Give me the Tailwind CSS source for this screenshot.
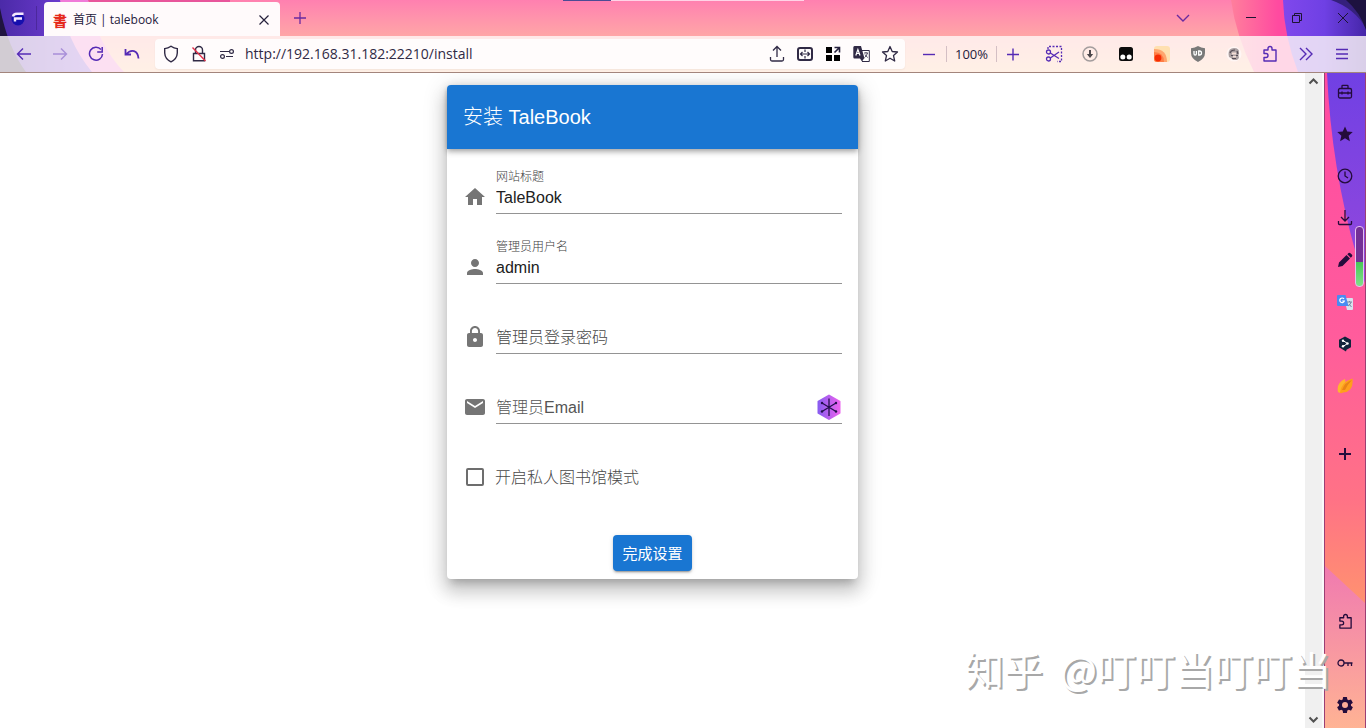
<!DOCTYPE html>
<html lang="zh-CN">
<head>
<meta charset="utf-8">
<meta name="viewport" content="width=device-width, initial-scale=1">
<title>首页 | talebook</title>
<script src="https://cdn.jsdelivr.net/npm/@tailwindcss/browser@4"></script>
</head>
<body class="h-screen flex flex-col overflow-hidden bg-white font-['Open_Sans','Noto_Sans_CJK_SC',sans-serif] text-[#25203c]">

<header class="relative shrink-0 border-b border-[#a3857c] bg-linear-to-b from-[#ff80b0] to-[#ffc89a]">
  <!-- theme artwork -->
  <svg class="absolute left-0 top-0" width="300" height="72" viewBox="0 0 300 72" aria-hidden="true">
    <defs><linearGradient id="vio" x1="0" x2="1"><stop offset="0" stop-color="#4b2aa8"/><stop offset="1" stop-color="#7b43e0"/></linearGradient></defs>
    <path d="M0 0H88Q98 45 124 72H0Z" fill="#f07ad8"/>
    <path d="M0 0H60Q66 40 92 72H0Z" fill="url(#vio)"/>
    <path d="M88 0H230V8H92Z" fill="#e8559b"/>
    <path d="M0 8Q8 48 26 72H0Z" fill="#20143f"/>
  </svg>
  <svg class="absolute right-0 top-0" width="180" height="72" viewBox="0 0 180 72" aria-hidden="true">
    <defs><linearGradient id="pk" x1="0" x2="1"><stop offset="0" stop-color="#ff7f9c"/><stop offset=".35" stop-color="#ff4aa0"/></linearGradient>
    <linearGradient id="vr" x1="0" x2="1"><stop offset="0" stop-color="#8048ec"/><stop offset=".5" stop-color="#6f40e4"/><stop offset="1" stop-color="#4526a8"/></linearGradient></defs>
    <path d="M45 0H180V72H68Q50 36 45 0Z" fill="url(#pk)"/>
    <path d="M97 0H180V72H112Q98 36 97 0Z" fill="url(#vr)"/>
    <path d="M145 0H180V28Q168 8 145 0Z" fill="#35207c"/>
    <path d="M160 0H180V30Q174 12 160 0Z" fill="#1d1240"/>
  </svg>
  <div class="absolute top-0 left-[563px] w-12 h-px bg-[#4c4b94]"></div>
  <div class="absolute top-0 left-[611px] w-[193px] h-px bg-[#ffd3e6]"></div>

  <div class="relative flex h-9 items-center">
    <button class="w-9 h-9 grid place-items-center" aria-label="Firefox View">
      <svg width="16" height="16" viewBox="0 0 16 16"><circle cx="8" cy="9" r="6.500" fill="#160fae"/><path d="M3 6.500Q3.500 3.800 7 3.800H13.500M5 11.500V8.500H12" fill="none" stroke="#f6e9ff" stroke-width="2.400"/></svg>
    </button>
    <div class="w-2 h-6 border-l border-[#4c289c]"></div>
    <div class="self-end flex items-center w-[236px] h-[34px] rounded-t bg-[#fffafb] pt-[2px] pl-2 pr-2">
      <span class="w-4 text-center text-sm leading-4 font-black text-[#e5291c] font-['Noto_Sans_CJK_TC',sans-serif]">書</span>
      <span class="ml-[5px] grow text-xs">首页 | talebook</span>
      <button class="w-4 h-4" aria-label="关闭标签页"><svg width="16" height="16" viewBox="0 0 16 16" fill="none" stroke="#25203c" stroke-width="1.200"><path d="M3.500 3.500l9 9M12.500 3.500l-9 9"/></svg></button>
    </div>
    <button class="w-10 h-9 grid place-items-center" aria-label="新标签页"><svg width="14" height="14" viewBox="0 0 14 14" stroke="#6a2aa0" stroke-width="1.300"><path d="M7 1v12M1 7h12"/></svg></button>
    <div class="grow"></div>
    <button class="w-[46px] h-9 grid place-items-center mr-[22px]" aria-label="列出所有标签页"><svg width="14" height="10" viewBox="0 0 14 10" fill="none" stroke="#6a2aa0" stroke-width="1.400"><path d="M1 2l6 6 6-6"/></svg></button>
    <button class="w-[46px] h-9 grid place-items-center" aria-label="最小化"><svg width="12" height="12" viewBox="0 0 12 12" stroke="#1d1433"><path d="M1 5.500h10"/></svg></button>
    <button class="w-[46px] h-9 grid place-items-center" aria-label="还原"><svg width="12" height="12" viewBox="0 0 12 12" fill="none" stroke="#1d1433"><path d="M1.500 3.500h7v7h-7zM3.500 3.500v-2h7v7h-2"/></svg></button>
    <button class="w-[46px] h-9 grid place-items-center" aria-label="关闭"><svg width="12" height="12" viewBox="0 0 12 12" stroke="#1d1433"><path d="M1 1l10 10M11 1L1 11"/></svg></button>
  </div>

  <nav class="relative flex h-9 items-center bg-[#fffaf9]/80 pl-[6px] pr-[6px] text-[#552bb5]">
    <button class="w-9 h-9 grid place-items-center" aria-label="后退"><svg width="16" height="16" viewBox="0 0 16 16" fill="none" stroke="currentColor" stroke-width="1.400"><path d="M15 8H1.500M7 2.500L1.500 8 7 13.500"/></svg></button>
    <button class="w-9 h-9 grid place-items-center opacity-40" aria-label="前进"><svg width="16" height="16" viewBox="0 0 16 16" fill="none" stroke="currentColor" stroke-width="1.400"><path d="M1 8h13.500M9 2.500L14.500 8 9 13.500"/></svg></button>
    <button class="w-9 h-9 grid place-items-center" aria-label="刷新"><svg width="16" height="16" viewBox="0 0 16 16" fill="none" stroke="currentColor" stroke-width="1.500"><path d="M13 3.500A6.500 6.500 0 1 0 14.500 8"/><path d="M14.200 1v5H9.200" /></svg></button>
    <button class="w-9 h-9 grid place-items-center" aria-label="撤销"><svg width="16" height="16" viewBox="0 0 16 16" fill="none" stroke="currentColor" stroke-width="1.800"><path d="M1.500 3v5.500h5.500M2 8.500Q6 4 10 5.200 14 6.500 14.500 12.500"/></svg></button>
    <div class="ml-[5px] mr-[1px] flex grow h-[30px] items-center rounded bg-[#fffcfc] text-[#302a45] shadow-xs">
      <button class="w-8 grid place-items-center" aria-label="隐私保护"><svg width="16" height="18" viewBox="0 0 16 18" fill="none" stroke="currentColor" stroke-width="1.400"><path d="M8 1.200Q11 3.400 14.300 3.600V8Q14 14 8 16.800 2 14 1.700 8V3.600Q5 3.400 8 1.200Z"/></svg></button>
      <button class="w-6 grid place-items-center" aria-label="连接不安全"><svg width="16" height="18" viewBox="0 0 16 18" fill="none" stroke="currentColor" stroke-width="1.400"><path d="M4.500 8V5a3.500 3.500 0 0 1 7 0v3M2.500 8.500h11v7.300h-11z"/><path d="M1.500 2.500l13 13.500" stroke="#e2304a"/></svg></button>
      <button class="w-8 grid place-items-center" aria-label="权限"><svg width="16" height="12" viewBox="0 0 16 12" fill="none" stroke="currentColor" stroke-width="1.200"><path d="M1 3.500h9M7 8.500h7"/><circle cx="12.500" cy="3.500" r="1.900"/><circle cx="3.500" cy="8.500" r="1.900"/></svg></button>
      <input class="min-w-0 grow h-7 pb-[2px] pl-[2px] text-sm bg-transparent outline-none" aria-label="网址" value="http://192.168.31.182:22210/install">
      <button class="w-7 grid place-items-center" aria-label="分享"><svg width="16" height="18" viewBox="0 0 16 18" fill="none" stroke="currentColor" stroke-width="1.300"><path d="M8 12V1.500M4 5.500l4-4 4 4M1.500 12v2.500q0 1.500 1.500 1.500h10q1.500 0 1.500-1.500V12"/></svg></button>
      <button class="w-7 grid place-items-center" aria-label="页宽"><svg width="16" height="16" viewBox="0 0 16 16" fill="none" stroke="currentColor"><rect x="1" y="2" width="14" height="12" rx="2" stroke-width="2"/><path d="M8 3.500v2.500M8 10v2.500M3.500 8h9M5.500 6l-2 2 2 2M10.500 6l2 2-2 2" stroke-width="1.200"/></svg></button>
      <button class="w-7 grid place-items-center" aria-label="二维码"><svg width="16" height="16" viewBox="0 0 16 16"><path d="M1 1h6v6H1zM1 9h6v6H1zM9 9h6v6H9z" fill="#000"/><path d="M9.500 1.500H14.500V6.500M14 2L9.500 6.500" stroke="#25203c" stroke-width="1.600" fill="none"/></svg></button>
      <button class="w-7 grid place-items-center" aria-label="翻译"><svg width="17" height="16" viewBox="0 0 17 16"><path d="M7.500 4.500h8.800v11H9" fill="#fff" stroke="#302a45"/><path d="M1.500 0h6.500l3.500 12.500H1.500Q.3 12.500.3 11V1.500Q.3 0 1.500 0zM7 12.500h4L9 15.500z" fill="#302a45"/><path d="M2.800 9.500L4.900 3.500 7 9.500M3.500 7.500h2.800" stroke="#fff" stroke-width="1.200" fill="none"/><path d="M11 7h4M13 6v1M14.500 7q-1 3.500-3 4.500M12 8.500q1 2 2.800 3" stroke="#302a45" stroke-width=".8" fill="none"/></svg></button>
      <button class="w-[30px] grid place-items-center" aria-label="收藏"><svg width="18" height="18" viewBox="0 0 18 18" fill="none" stroke="currentColor" stroke-width="1.300" stroke-linejoin="round"><path d="M9 1.500l2.200 5 5.300.5-4 3.600 1.200 5.400L9 13.200 4.300 16l1.200-5.400-4-3.600 5.300-.5z"/></svg></button>
    </div>
    <button class="w-10 pl-[6px] h-9 grid place-items-center" aria-label="缩小"><svg width="14" height="14" viewBox="0 0 14 14" stroke="currentColor" stroke-width="1.400"><path d="M1 7.500h12"/></svg></button>
    <button class="w-[51px] h-4 leading-4 border-x border-[#d4bfc4] pb-[2px] text-center text-[13px] text-[#25203c]">100%</button>
    <button class="w-8 h-9 grid place-items-center" aria-label="放大"><svg width="14" height="14" viewBox="0 0 14 14" stroke="currentColor" stroke-width="1.400"><path d="M7 1.500v12M1 7.500h12"/></svg></button>
    <div class="w-[7px]"></div>
    <button class="w-9 h-9 grid place-items-center" aria-label="截图"><svg width="18" height="18" viewBox="0 0 18 18" fill="none" stroke="currentColor" stroke-width="1.300"><path d="M3 4V1.500H16.500V16.500H12" stroke-dasharray="2 1.500"/><circle cx="3.500" cy="7" r="2"/><circle cx="3.500" cy="14" r="2"/><path d="M5.300 8L14 13.500M5.300 13L14 7"/></svg></button>
    <button class="w-9 h-9 grid place-items-center" aria-label="下载"><svg width="16" height="16" viewBox="0 0 16 16" fill="none"><circle cx="8" cy="8" r="7" stroke="#a39d9d" stroke-width="1.500"/><path d="M8 4v6" stroke="#4d484c" stroke-width="2"/><path d="M4.800 8h6.400L8 12z" fill="#4d484c"/></svg></button>
    <button class="w-9 h-9 grid place-items-center" aria-label="Tampermonkey"><svg width="16" height="16" viewBox="0 0 16 16"><rect x="1" y="1" width="14" height="14" rx="2.500" fill="#0b0b0b"/><circle cx="4.800" cy="11" r="2.500" fill="#fff"/><circle cx="11.200" cy="11" r="2.500" fill="#fff"/></svg></button>
    <button class="w-9 h-9 grid place-items-center" aria-label="RSS"><svg width="16" height="16" viewBox="0 0 16 16"><rect width="16" height="16" rx="3" fill="#ffe0b0"/><path d="M0 3Q13 3 13 16H3Q0 16 0 13Z" fill="#ffa56e"/><path d="M0 6Q10 6 10 16H3Q0 16 0 13Z" fill="#ff7d45"/><circle cx="4" cy="12" r="3.400" fill="#f52c05"/></svg></button>
    <button class="w-9 h-9 grid place-items-center" aria-label="uBlock"><svg width="16" height="16" viewBox="0 0 16 16"><path d="M8 0Q11 2 15 2.200V7Q15 12.500 8 16 1 12.500 1 7V2.200Q5 2 8 0Z" fill="#797979"/><path d="M4 5v2.800q0 1.200 1.200 1.200t1.200-1.200V5M8.700 5v4h.8q2 0 2-2t-2-2z" fill="none" stroke="#fff" stroke-width="1.300"/></svg></button>
    <button class="w-9 h-9 grid place-items-center" aria-label="扩展头像"><svg width="16" height="16" viewBox="0 0 16 16"><circle cx="8" cy="8" r="7.500" fill="#fff6f4"/><path d="M2.500 8Q2.500 2 8 2t5 4.500l-.5 3 .5 2.500-2 2H7l-2-2-2-1z" fill="#aaa0a2"/><path d="M4 7Q5 4 9 4M5 9.500h2M10 9.500h2M6 12.500h4M11 5l1 3" stroke="#554c55" fill="none" stroke-width="1.200"/><path d="M6 6.500h4v2H6zM7 10h3v1.500H7z" fill="#f5dfd8"/></svg></button>
    <button class="w-9 h-9 grid place-items-center" aria-label="扩展"><svg width="16" height="18" viewBox="0 0 16 18" fill="none" stroke="currentColor" stroke-width="1.400" stroke-linejoin="round"><path d="M2 5H6V3.500a2 2 0 0 1 4 0V5H14V16H2V12.500H4a2 2 0 0 0 0-4H2Z"/></svg></button>
    <button class="w-9 h-9 grid place-items-center" aria-label="更多工具"><svg width="16" height="14" viewBox="0 0 16 14" fill="none" stroke="currentColor" stroke-width="1.400"><path d="M2 1l6 6-6 6M8 1l6 6-6 6"/></svg></button>
    <button class="w-9 h-9 grid place-items-center" aria-label="菜单"><svg width="14" height="12" viewBox="0 0 14 12" stroke="currentColor" stroke-width="1.300"><path d="M1 1.500h12M1 6h12M1 10.500h12"/></svg></button>
  </nav>
</header>

<div class="flex grow min-h-0">
  <main class="grow min-w-0 pt-3 font-['Liberation_Sans','Noto_Sans_CJK_SC',sans-serif]">
    <form class="mx-auto w-full max-w-[411px] rounded bg-white shadow-[0_7px_8px_-4px_rgba(0,0,0,0.2),0_12px_17px_2px_rgba(0,0,0,0.14),0_5px_22px_4px_rgba(0,0,0,0.12)]">
      <h1 class="flex h-16 items-center rounded-t bg-[#1976d2] px-4 text-xl font-light text-white shadow-[0_2px_4px_-1px_rgba(0,0,0,0.2),0_4px_5px_rgba(0,0,0,0.14),0_1px_10px_rgba(0,0,0,0.12)]">安装 TaleBook</h1>
      <div class="p-4 pb-2 text-base text-[#757575]">
        <div class="flex gap-[9px] h-[70px] pt-4">
          <svg class="shrink-0 mt-1" width="24" height="24" viewBox="0 0 24 24" fill="currentColor"><path d="M10 20v-6h4v6h5v-8h3L12 3 2 12h3v8z"/></svg>
          <div class="relative grow">
            <label for="title" class="absolute -top-3 left-0 text-xs leading-4 font-light text-[#404040]">网站标题</label>
            <input id="title" value="TaleBook" class="w-full h-[33px] pt-[2px] border-b border-[#949494] text-[#212121] outline-none">
          </div>
        </div>
        <div class="flex gap-[9px] h-[70px] pt-4">
          <svg class="shrink-0 mt-1" width="24" height="24" viewBox="0 0 24 24" fill="currentColor"><path d="M12 12c2.210 0 4-1.790 4-4s-1.790-4-4-4-4 1.790-4 4 1.790 4 4 4zm0 2c-2.670 0-8 1.340-8 4v2h16v-2c0-2.660-5.330-4-8-4z"/></svg>
          <div class="relative grow">
            <label for="user" class="absolute -top-3 left-0 text-xs leading-4 font-light text-[#404040]">管理员用户名</label>
            <input id="user" value="admin" class="w-full h-[33px] pt-[2px] border-b border-[#949494] text-[#212121] outline-none">
          </div>
        </div>
        <div class="flex gap-[9px] h-[70px] pt-4">
          <svg class="shrink-0 mt-1" width="24" height="24" viewBox="0 0 24 24" fill="currentColor"><path d="M18 8h-1V6c0-2.760-2.240-5-5-5S7 3.240 7 6v2H6c-1.100 0-2 .9-2 2v10c0 1.100.9 2 2 2h12c1.100 0 2-.9 2-2V10c0-1.100-.9-2-2-2zm-6 9c-1.100 0-2-.9-2-2s.9-2 2-2 2 .9 2 2-.9 2-2 2zM15.100 8H8.900V6c0-1.710 1.390-3.100 3.100-3.100s3.100 1.390 3.100 3.100z"/></svg>
          <input type="password" aria-label="管理员登录密码" placeholder="管理员登录密码" class="grow min-w-0 h-[33px] pt-[2px] border-b border-[#949494] font-light outline-none placeholder:text-[#484848]">
        </div>
        <div class="flex gap-[9px] h-[70px] pt-4">
          <svg class="shrink-0 mt-1" width="24" height="24" viewBox="0 0 24 24" fill="currentColor"><path d="M20 4H4c-1.100 0-2 .9-2 2v12c0 1.100.9 2 2 2h16c1.100 0 2-.9 2-2V6c0-1.100-.9-2-2-2zm0 4l-8 5-8-5V6l8 5 8-5z"/></svg>
          <div class="flex grow h-[33px] border-b border-[#949494]">
            <input type="email" aria-label="管理员Email" placeholder="管理员Email" class="grow min-w-0 pt-[2px] font-light outline-none placeholder:text-[#555]">
            <svg class="mt-[3px]" width="26" height="26" viewBox="0 0 26 26"><defs><linearGradient id="hx"><stop stop-color="#8a5cf0"/><stop offset="1" stop-color="#ea62ee"/></linearGradient></defs><path d="M13 1.500l10.500 6v11.500l-10.500 6-10.500-6V7.500z" fill="url(#hx)" stroke="url(#hx)" stroke-width="2" stroke-linejoin="round"/><path d="M13 4.500v17.500M6 9l14 8.500M20 9L6 17.500" stroke="#22104d" stroke-width="1.300"/><circle cx="6" cy="9" r="1.200" fill="#22104d"/><circle cx="20" cy="9" r="1.200" fill="#22104d"/><circle cx="6" cy="17.500" r="1.200" fill="#22104d"/><circle cx="20" cy="17.500" r="1.200" fill="#22104d"/></svg>
          </div>
        </div>
        <div class="flex h-[90px] pt-5">
          <label class="flex h-6 items-center gap-[11px] pl-[3px] font-light text-[#484848]"><input type="checkbox" class="appearance-none size-[18px] rounded-xs border-2 border-[#6d6d6d]"><span class="pt-[2px]">开启私人图书馆模式</span></label>
        </div>
        <div class="flex justify-center">
          <button type="submit" class="h-9 w-[79px] pt-[2px] rounded bg-[#1976d2] text-[15px] text-white shadow-[0_3px_1px_-2px_rgba(0,0,0,0.2),0_2px_2px_rgba(0,0,0,0.14),0_1px_5px_rgba(0,0,0,0.12)]">完成设置</button>
        </div>
      </div>
    </form>
  </main>

  <div class="w-[19px] shrink-0 flex flex-col justify-between items-center bg-[#f0f0f0] border-r-2 border-[#fafafa] py-[5px]" aria-hidden="true">
    <svg width="11" height="7" viewBox="0 0 11 7" fill="none" stroke="#505050" stroke-width="2"><path d="M1.500 5.500l4-4 4 4"/></svg>
    <svg width="11" height="7" viewBox="0 0 11 7" fill="none" stroke="#505050" stroke-width="2"><path d="M1.500 1.500l4 4 4-4"/></svg>
  </div>

  <aside class="relative w-[42px] shrink-0 border-x border-[#9b3f74] text-[#240c3c]">
    <svg class="absolute inset-0 w-full h-full" viewBox="0 0 40 655" preserveAspectRatio="none" aria-hidden="true">
      <defs>
        <linearGradient id="s1" x2="0" y2="1"><stop stop-color="#ff4aa2"/><stop offset=".4" stop-color="#ff5c9c"/><stop offset=".65" stop-color="#ff7286"/><stop offset=".82" stop-color="#ff946e"/></linearGradient>
        <linearGradient id="s2" x2="0" y2="1"><stop stop-color="#f07ab0"/><stop offset="1" stop-color="#ffb394"/></linearGradient>
        <linearGradient id="s3" x2="0" y2="1"><stop stop-color="#7040e4"/><stop offset="1" stop-color="#9448dc"/></linearGradient>
      </defs>
      <path d="M0 0H40V655H0z" fill="url(#s1)"/>
      <path d="M2 0H40V210Q7 110 2 0z" fill="url(#s3)"/>
      <path d="M0 493L40 530V655H0z" fill="url(#s2)"/>
    </svg>
    <div class="relative flex h-full flex-col items-center">
      <button class="h-[38px] w-full grid place-items-center" aria-label="工具箱"><svg width="16" height="16" viewBox="0 0 16 16" fill="none" stroke="currentColor" stroke-width="1.300"><rect x="1.500" y="4.500" width="13" height="9.500" rx="1.500"/><path d="M5 4V2q0-.7.700-.7h4.600q.7 0 .7.700v2M1.500 9h3.500M5 9h6M11 9h3.500M5 7.500v3M11 7.500v3"/></svg></button>
      <button class="h-[46px] w-full grid place-items-center" aria-label="书签"><svg width="16" height="16" viewBox="0 0 18 18" fill="currentColor"><path d="M9 .5l2.500 5.700 6.200.6-4.600 4.100 1.400 6.200L9 13.800l-5.500 3.300 1.400-6.200L.3 6.800l6.200-.6z"/></svg></button>
      <button class="h-[38px] w-full grid place-items-center" aria-label="历史"><svg width="16" height="16" viewBox="0 0 16 16" fill="none" stroke="currentColor" stroke-width="1.300"><circle cx="8" cy="8" r="6.800"/><path d="M8 3.500V8l3 2"/></svg></button>
      <button class="h-[46px] w-full grid place-items-center" aria-label="下载"><svg width="16" height="16" viewBox="0 0 16 16" fill="none" stroke="currentColor" stroke-width="1.300"><path d="M8 0v11M4 7l4 4 4-4M1.500 11v2.500q0 1 1 1h11q1 0 1-1V11"/></svg></button>
      <button class="h-[38px] w-full grid place-items-center" aria-label="笔记"><svg width="16" height="16" viewBox="0 0 16 16" fill="currentColor"><path d="M1 15l1-4.500 7.500-7.500 3.500 3.500L5.500 14zM10.300 2.200l1.300-1.200q.9-.7 1.800.2l1.400 1.400q.9.900.2 1.800l-1.200 1.300z"/></svg></button>
      <button class="h-[46px] w-full grid place-items-center" aria-label="谷歌翻译"><svg width="16" height="16" viewBox="0 0 16 16"><path d="M7 4h8q1 0 1 1v10q0 1-1 1H10z" fill="#d9e1ee"/><path d="M1 1h7.500l3 11H1Q0 12 0 11V2Q0 1 1 1z" fill="#4a8bf2"/><path d="M7 5A2.300 2.300 0 1 0 7.300 7H5.200" fill="none" stroke="#fff" stroke-width="1.200"/><path d="M10 8h5M12.500 7v1M14 8q-.5 3-3 4M12 10l2.500 3" stroke="#7889a0" fill="none"/></svg></button>
      <button class="h-[38px] w-full grid place-items-center" aria-label="DeepL"><svg width="14" height="16" viewBox="0 0 14 16"><path d="M7 .5l6 3.300v7.400L8.500 13.700 8 15.500 1 11.200V3.800z" fill="#10233c"/><path d="M5 4.500L9.500 7.500 5 10.500" stroke="#fff" fill="none"/><circle cx="5" cy="4.800" r="1.200" fill="#fff"/><circle cx="9.500" cy="7.500" r="1.200" fill="#fff"/><circle cx="5" cy="10.300" r="1.200" fill="#fff"/></svg></button>
      <button class="h-[46px] w-full grid place-items-center" aria-label="橙色应用"><svg width="16" height="16" viewBox="0 0 16 16"><path d="M1 14Q-1 5 8 1q2 8-5 14z" fill="#ffb52e"/><path d="M3 15Q4 4 15.500.5 17 14 6 14.500q-1.500 1-3 .5z" fill="#ff9f1c"/><path d="M5 12Q8 4 15 2q-5 5-7 10z" fill="#e98316"/></svg></button>
      <div class="h-6"></div>
      <button class="h-[42px] w-full grid place-items-center" aria-label="添加"><svg width="14" height="14" viewBox="0 0 14 14" stroke="currentColor" stroke-width="2"><path d="M7 1v12M1 7h12"/></svg></button>
      <div class="grow"></div>
      <button class="h-[42px] w-full grid place-items-center" aria-label="扩展"><svg width="15" height="17" viewBox="0 0 16 18" fill="none" stroke="currentColor" stroke-width="1.400" stroke-linejoin="round"><path d="M2 5H6V3.500a2 2 0 0 1 4 0V5H14V16H2V12.500H4a2 2 0 0 0 0-4H2Z"/></svg></button>
      <button class="h-[42px] w-full grid place-items-center" aria-label="密码"><svg width="16" height="10" viewBox="0 0 16 10" fill="none" stroke="currentColor" stroke-width="1.300"><circle cx="4" cy="5" r="3"/><path d="M7 5h8.500M11 5v3M14.500 5v3"/></svg></button>
      <button class="h-[42px] w-full grid place-items-center" aria-label="设置"><svg width="20" height="20" viewBox="0 0 24 24" fill="currentColor"><path d="M19.140 12.940c.04-.3.06-.61.06-.94 0-.32-.02-.64-.07-.94l2.030-1.580a.49.49 0 0 0 .12-.61l-1.920-3.320a.49.49 0 0 0-.59-.22l-2.390.96a7 7 0 0 0-1.620-.94l-.36-2.540a.48.48 0 0 0-.48-.41h-3.840a.47.47 0 0 0-.47.41l-.36 2.540c-.59.240-1.130.570-1.620.940l-2.390-.96a.48.48 0 0 0-.59.220L2.740 8.870a.48.48 0 0 0 .12.610l2.030 1.580a6 6 0 0 0-.02 1.880l-2.030 1.580a.49.49 0 0 0-.12.610l1.920 3.320c.12.220.37.290.59.220l2.390-.96c.5.380 1.030.7 1.620.940l.36 2.540c.05.240.24.410.48.410h3.840c.24 0 .44-.17.470-.41l.36-2.540a7 7 0 0 0 1.620-.94l2.390.96c.22.080.47 0 .59-.22l1.920-3.320a.47.47 0 0 0-.12-.61zM12 15.600a3.600 3.600 0 1 1 0-7.200 3.600 3.600 0 0 1 0 7.200z"/></svg></button>
      <div class="h-[2px]"></div>
    </div>
    <!-- battery-style desktop gauge floating at the window edge -->
    <div class="absolute right-[1px] top-[153px] h-[61px] w-[9px] rounded-sm border border-[#e6c1f0] bg-linear-to-b from-[#743096] from-60% via-[#48c858] via-60% to-[#7fe08a]"></div>
  </aside>
</div>

<div class="absolute bottom-8 right-[35px] flex gap-[17px] whitespace-nowrap text-[39px] leading-[56px] text-white font-['Noto_Sans_CJK_SC',sans-serif] [text-shadow:2px_2px_0_#a8a8a8] pointer-events-none"><span>知乎</span><span>@叮叮当叮叮当</span></div>
</body>
</html>
